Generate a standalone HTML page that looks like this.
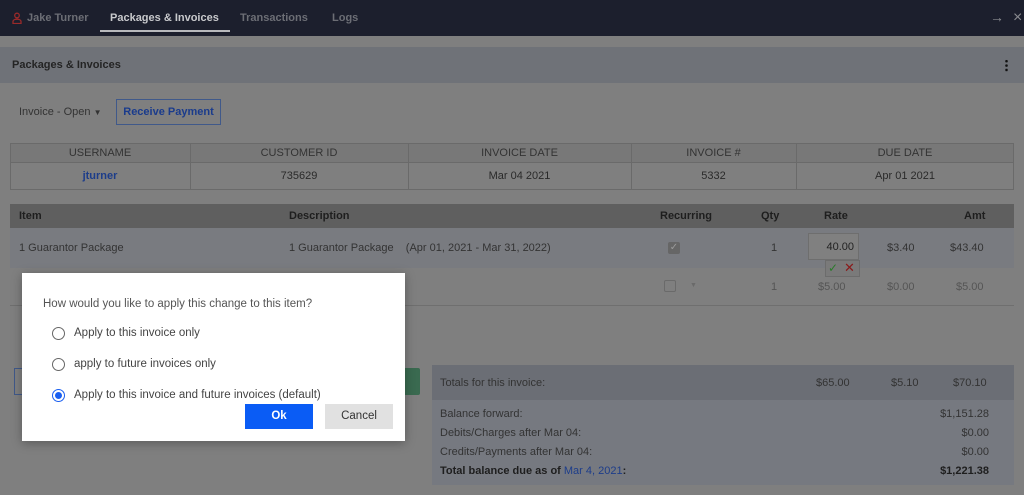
<!DOCTYPE html>
<html><head><meta charset="utf-8"><style>
*{margin:0;padding:0;box-sizing:border-box}
body{width:1024px;height:495px;overflow:hidden;background:#7f7f7f;font-family:"Liberation Sans",sans-serif;font-size:11px;color:#2a2a2a;position:relative}
.a{position:absolute;white-space:nowrap}
.nav{left:0;top:0;width:1024px;height:36px;background:#1c1f2d}
.c{text-align:center}
.r{text-align:right}
</style></head><body>
<div class="a nav"></div>
<svg class="a" style="left:12px;top:12px" width="10" height="12" viewBox="0 0 10 12"><circle cx="5" cy="3.5" r="2.3" fill="none" stroke="#9a2a2a" stroke-width="1.3"/><path d="M1 11.5v-2c0-1.5 2-2.3 4-2.3s4 .8 4 2.3v2z" fill="none" stroke="#9a2a2a" stroke-width="1.3"/></svg>
<div class="a" style="left:27px;top:12px;font-size:11px;font-weight:bold;color:#6c6e75">Jake Turner</div>
<div class="a" style="left:110px;top:12px;font-size:11px;font-weight:bold;color:#c8c9cc">Packages &amp; Invoices</div>
<div class="a" style="left:100px;top:30px;width:130px;height:2px;background:#b8b9bc"></div>
<div class="a" style="left:240px;top:12px;font-size:11px;font-weight:bold;color:#6c6e75">Transactions</div>
<div class="a" style="left:332px;top:12px;font-size:11px;font-weight:bold;color:#6c6e75">Logs</div>
<div class="a" style="left:990px;top:9px;font-size:14px;color:#8a8b90">→</div>
<div class="a" style="left:1013px;top:9px;font-size:16px;color:#8a8b90">×</div>

<div class="a" style="left:0;top:47px;width:1024px;height:36px;background:#6f7278"></div>
<div class="a" style="left:12px;top:59px;font-weight:bold;color:#242424">Packages &amp; Invoices</div>
<div class="a" style="left:1005px;top:59px;width:3px;height:13px;background:radial-gradient(circle,#111 1.2px,transparent 1.4px) 0 0/3px 4.4px"></div>

<div class="a" style="left:19px;top:106px;color:#333">Invoice - Open <span style="font-size:8px">▼</span></div>
<div class="a" style="left:116px;top:99px;width:105px;height:26px;border:1px solid #40598a;color:#1a3b8c;font-weight:bold;line-height:24px;text-align:center">Receive Payment</div>

<div class="a" style="left:10px;top:143px;width:1004px;height:47px;border:1px solid #6a6a6a"></div>
<div class="a" style="left:11px;top:144px;width:1002px;height:19px;background:#787878;border-bottom:1px solid #6a6a6a"></div>
<div class="a" style="left:190px;top:143px;width:1px;height:47px;background:#6a6a6a"></div>
<div class="a" style="left:408px;top:143px;width:1px;height:47px;background:#6a6a6a"></div>
<div class="a" style="left:631px;top:143px;width:1px;height:47px;background:#6a6a6a"></div>
<div class="a" style="left:796px;top:143px;width:1px;height:47px;background:#6a6a6a"></div>
<div class="a c" style="left:10px;top:147px;width:180px;color:#333">USERNAME</div>
<div class="a c" style="left:190px;top:147px;width:218px;color:#333">CUSTOMER ID</div>
<div class="a c" style="left:408px;top:147px;width:223px;color:#333">INVOICE DATE</div>
<div class="a c" style="left:631px;top:147px;width:165px;color:#333">INVOICE #</div>
<div class="a c" style="left:796px;top:147px;width:218px;color:#333">DUE DATE</div>
<div class="a c" style="left:10px;top:170px;width:180px;color:#1d3d8a;font-weight:bold">jturner</div>
<div class="a c" style="left:190px;top:170px;width:218px">735629</div>
<div class="a c" style="left:408px;top:170px;width:223px">Mar 04 2021</div>
<div class="a c" style="left:631px;top:170px;width:165px">5332</div>
<div class="a c" style="left:796px;top:170px;width:218px">Apr 01 2021</div>

<div class="a" style="left:10px;top:204px;width:1004px;height:24px;background:#5f5f5f"></div>
<div class="a" style="left:19px;top:210px;font-weight:bold;color:#1e1e1e">Item</div>
<div class="a" style="left:289px;top:210px;font-weight:bold;color:#1e1e1e">Description</div>
<div class="a" style="left:660px;top:210px;font-weight:bold;color:#1e1e1e">Recurring</div>
<div class="a" style="left:761px;top:210px;font-weight:bold;color:#1e1e1e">Qty</div>
<div class="a" style="left:824px;top:210px;font-weight:bold;color:#1e1e1e">Rate</div>
<div class="a" style="left:964px;top:210px;font-weight:bold;color:#1e1e1e">Amt</div>
<div class="a" style="left:10px;top:228px;width:1004px;height:40px;background:#797b80"></div>
<div class="a" style="left:19px;top:242px;color:#333">1 Guarantor Package</div>
<div class="a" style="left:289px;top:242px;color:#333">1 Guarantor Package &nbsp;&nbsp; (Apr 01, 2021 - Mar 31, 2022)</div>
<div class="a" style="left:668px;top:242px;width:12px;height:12px;background:#666;border-radius:2px;color:#9a9a9a;font-size:10px;line-height:12px;text-align:center">✓</div>
<div class="a" style="left:771px;top:242px;color:#333">1</div>
<div class="a" style="left:808px;top:233px;width:51px;height:27px;background:#808080;border:1px solid #6e6e6e;padding:7px 4px 0 0;text-align:right;color:#222">40.00</div>
<div class="a" style="left:825px;top:260px;width:35px;height:17px;background:#7a7a7a;border:1px solid #6c6c6c"></div>
<div class="a" style="left:828px;top:261px;color:#2a7a2a;font-size:12px">✓</div>
<div class="a" style="left:844px;top:260px;color:#8a1a1a;font-size:13px">✕</div>
<div class="a" style="left:887px;top:242px;color:#333">$3.40</div>
<div class="a" style="left:950px;top:242px;color:#333">$43.40</div>
<div class="a" style="left:10px;top:268px;width:1004px;height:38px;border-bottom:1px solid #6f6f6f"></div>
<div class="a" style="left:664px;top:280px;width:12px;height:12px;border:1px solid #6a6a6a;border-radius:2px"></div>
<div class="a" style="left:690px;top:282px;font-size:7px;color:#6a6a6a">▼</div>
<div class="a" style="left:771px;top:281px;color:#555">1</div>
<div class="a" style="left:818px;top:281px;color:#555">$5.00</div>
<div class="a" style="left:887px;top:281px;color:#555">$0.00</div>
<div class="a" style="left:956px;top:281px;color:#555">$5.00</div>

<div class="a" style="left:14px;top:368px;width:30px;height:27px;border:1px solid #40598a"></div>
<div class="a" style="left:380px;top:368px;width:40px;height:27px;background:#3a6a50;border-radius:2px"></div>

<div class="a" style="left:432px;top:365px;width:582px;height:35px;background:#6b6e75"></div>
<div class="a" style="left:432px;top:400px;width:582px;height:85px;background:#767980"></div>
<div class="a" style="left:440px;top:377px;color:#333">Totals for this invoice:</div>
<div class="a" style="left:816px;top:377px;color:#333">$65.00</div>
<div class="a" style="left:891px;top:377px;color:#333">$5.10</div>
<div class="a" style="left:953px;top:377px;color:#333">$70.10</div>
<div class="a" style="left:440px;top:408px;color:#333">Balance forward:</div>
<div class="a r" style="left:900px;top:408px;width:89px;color:#333">$1,151.28</div>
<div class="a" style="left:440px;top:427px;color:#333">Debits/Charges after Mar 04:</div>
<div class="a r" style="left:900px;top:427px;width:89px;color:#333">$0.00</div>
<div class="a" style="left:440px;top:446px;color:#333">Credits/Payments after Mar 04:</div>
<div class="a r" style="left:900px;top:446px;width:89px;color:#333">$0.00</div>
<div class="a" style="left:440px;top:465px;color:#1e1e1e;font-weight:bold">Total balance due as of <span style="color:#1d3d8a;font-weight:normal">Mar 4, 2021</span>:</div>
<div class="a r" style="left:900px;top:465px;width:89px;color:#1e1e1e;font-weight:bold">$1,221.38</div>

<div class="a" style="left:22px;top:273px;width:383px;height:168px;background:#fff;box-shadow:0 2px 10px rgba(0,0,0,.3)"></div>
<div class="a" style="left:43px;top:298px;font-size:11.5px;color:#555">How would you like to apply this change to this item?</div>
<div class="a" style="left:52px;top:327px;width:13px;height:13px;border:1.5px solid #666;border-radius:50%"></div>
<div class="a" style="left:74px;top:327px;font-size:11.5px;color:#444">Apply to this invoice only</div>
<div class="a" style="left:52px;top:358px;width:13px;height:13px;border:1.5px solid #666;border-radius:50%"></div>
<div class="a" style="left:74px;top:358px;font-size:11.5px;color:#444">apply to future invoices only</div>
<div class="a" style="left:52px;top:389px;width:13px;height:13px;border:1.5px solid #1a5ff0;border-radius:50%;background:radial-gradient(circle,#1a5ff0 3.2px,#fff 3.7px)"></div>
<div class="a" style="left:74px;top:389px;font-size:11.5px;color:#444">Apply to this invoice and future invoices (default)</div>
<div class="a c" style="left:245px;top:404px;width:68px;height:25px;background:#0a5cf5;color:#fff;font-weight:bold;line-height:25px;font-size:11.5px">Ok</div>
<div class="a c" style="left:325px;top:404px;width:68px;height:25px;background:#e1e1e1;color:#333;line-height:25px;font-size:11.5px">Cancel</div>
</body></html>
